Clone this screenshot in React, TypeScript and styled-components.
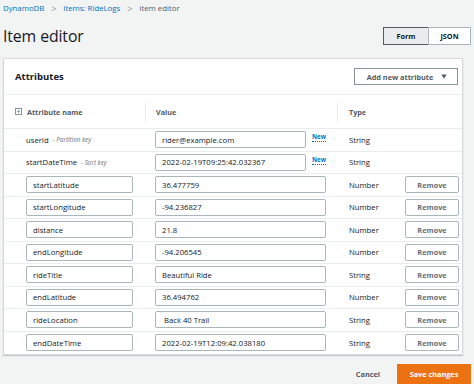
import React from "react";
import styled, { createGlobalStyle } from "styled-components";

const Global = createGlobalStyle`
  html, body { margin: 0; padding: 0; background: #f2f3f3; }
  body { font-family: "Open Sans", "Noto Sans", sans-serif; color: #16191f; }
  * { box-sizing: border-box; }
`;

const Page = styled.div`
  width: 474px;
  height: 384px;
  padding: 2px 3px 0 3px;
  display: flex;
  flex-direction: column;
  overflow: hidden;
`;

const Crumbs = styled.div`
  display: flex;
  align-items: center;
  height: 12px;
  font-size: 7.8px;
  color: #545b64;
`;

const CrumbLink = styled.span`
  color: #0073bb;
`;

const Sep = styled.span`
  color: #879596;
  width: 19px;
  text-align: center;
  font-size: 9px;
`;

const HeaderRow = styled.div`
  display: flex;
  justify-content: space-between;
  align-items: center;
  margin-top: 13px;
  height: 18px;
`;

const Title = styled.h1`
  margin: 0;
  font-size: 15.8px;
  font-weight: 400;
  letter-spacing: -0.1px;
  color: #16191f;
  line-height: 18px;
`;

const Toggle = styled.div`
  display: flex;
`;

const ToggleBtn = styled.button<{ $active?: boolean }>`
  height: 18px;
  width: ${(p) => (p.$active ? "46px" : "43px")};
  border: 1px solid ${(p) => (p.$active ? "#545b64" : "#aab7b8")};
  background: ${(p) => (p.$active ? "#eaeded" : "#ffffff")};
  color: #16191f;
  font-family: inherit;
  font-size: 7.3px;
  font-weight: 700;
  padding: 0;
  margin-left: ${(p) => (p.$active ? "0" : "-1px")};
`;

const Panel = styled.div`
  margin-top: 13px;
  width: 460px;
  background: #ffffff;
  border: 1px solid #d5dbdb;
  box-shadow: 0 1px 1px rgba(0, 28, 36, 0.2);
`;

const PanelHead = styled.div`
  height: 36px;
  display: flex;
  align-items: center;
  justify-content: space-between;
  padding: 0 4px 0 11px;
  border-bottom: 1px solid #eaeded;
`;

const PanelTitle = styled.h2`
  margin: 0;
  font-size: 9.5px;
  font-weight: 700;
  color: #16191f;
`;

const AddBtn = styled.button`
  height: 17px;
  width: 104px;
  border: 1px solid #879596;
  background: #fff;
  font-family: inherit;
  font-size: 7.3px;
  font-weight: 700;
  color: #545b64;
  display: flex;
  align-items: center;
  justify-content: center;
  gap: 8px;
  padding: 0 0 0 2px;
`;

const Row = styled.div<{ $head?: boolean }>`
  display: grid;
  grid-template-columns: 141px 192px 68px 1fr;
  align-items: center;
  height: ${(p) => (p.$head ? "34px" : "22.5px")};
  border-bottom: 1px solid #eaeded;
  font-size: 7.7px;
  &:last-child { border-bottom: none; }
`;

const HeadCell = styled.div<{ $divider?: boolean; $pl: number }>`
  display: flex;
  align-items: center;
  gap: 5px;
  height: 100%;
  padding-left: ${(p) => p.$pl}px;
  font-weight: 700;
  font-size: 7.2px;
  color: #545b64;
  position: relative;
  ${(p) =>
    p.$divider
      ? `&::before { content: ""; position: absolute; left: 0; top: 7px; bottom: 7px; width: 1px; background: #eaeded; }`
      : ""}
`;

const Cell = styled.div<{ $pl: number }>`
  display: flex;
  align-items: center;
  padding-left: ${(p) => p.$pl}px;
  color: #16191f;
  white-space: nowrap;
`;

const KeyName = styled.span`
  font-size: 7.7px;
  color: #16191f;
`;

const KeyHint = styled.span`
  font-size: 6.3px;
  font-style: italic;
  color: #687078;
  margin-left: 4px;
`;

const Input = styled.div<{ $w: number }>`
  width: ${(p) => p.$w}px;
  height: 17px;
  border: 1px solid #aab7b8;
  border-radius: 2px;
  padding-left: 6px;
  display: flex;
  align-items: center;
  font-size: 7.7px;
  color: #16191f;
`;

const NewLink = styled.span`
  margin-left: 6px;
  font-size: 6.2px;
  font-weight: 700;
  color: #0073bb;
  border-bottom: 1px dotted #0073bb;
  line-height: 8px;
  margin-top: -4px;
`;

const TypeText = styled.span`
  color: #16191f;
  font-size: 7.7px;
`;

const RemoveBtn = styled.button`
  width: 54px;
  height: 17px;
  border: 1px solid #aab7b8;
  border-radius: 2px;
  background: #fff;
  font-family: inherit;
  font-size: 7.3px;
  font-weight: 700;
  color: #687078;
  padding: 0;
`;

const Footer = styled.div`
  display: flex;
  justify-content: flex-end;
  align-items: center;
  margin-top: 9px;
  gap: 17px;
`;

const CancelBtn = styled.button`
  border: none;
  background: transparent;
  font-family: inherit;
  font-size: 7.3px;
  font-weight: 700;
  color: #545b64;
  padding: 0;
`;

const SaveBtn = styled.button`
  width: 74px;
  height: 20px;
  border: none;
  background: #ec7211;
  color: #fff;
  font-family: inherit;
  font-size: 7.3px;
  font-weight: 700;
  padding: 0;
`;

const PlusBox = () => (
  <svg width="7" height="7" viewBox="0 0 7 7">
    <rect x="0.5" y="0.5" width="6" height="6" fill="none" stroke="#879596" strokeWidth="1" />
    <path d="M3.5 2v3M2 3.5h3" stroke="#879596" strokeWidth="0.8" />
  </svg>
);

const Caret = () => (
  <svg width="6" height="5" viewBox="0 0 6 5">
    <path d="M0.3 0.5h5.4L3 4.8z" fill="#545b64" />
  </svg>
);

type Attr = { name: string; value: string; type: string };

const keys = [
  { name: "userId", hint: "Partition key", value: "rider@example.com" },
  { name: "startDateTime", hint: "Sort key", value: "2022-02-19T09:25:42.032367" },
];

const attrs: Attr[] = [
  { name: "startLatitude", value: "36.477759", type: "Number" },
  { name: "startLongitude", value: "-94.236827", type: "Number" },
  { name: "distance", value: "21.8", type: "Number" },
  { name: "endLongitude", value: "-94.206545", type: "Number" },
  { name: "rideTitle", value: "Beautiful Ride", type: "String" },
  { name: "endLatitude", value: "36.494762", type: "Number" },
  { name: "rideLocation", value: "\u00a0Back 40 Trail", type: "String" },
  { name: "endDateTime", value: "2022-02-19T12:09:42.038180", type: "String" },
];

export default function App() {
  return (
    <>
      <Global />
      <Page>
        <Crumbs>
          <CrumbLink>DynamoDB</CrumbLink>
          <Sep>&gt;</Sep>
          <CrumbLink>Items: RideLogs</CrumbLink>
          <Sep>&gt;</Sep>
          <span>Item editor</span>
        </Crumbs>
        <HeaderRow>
          <Title>Item editor</Title>
          <Toggle>
            <ToggleBtn $active>Form</ToggleBtn>
            <ToggleBtn>JSON</ToggleBtn>
          </Toggle>
        </HeaderRow>
        <Panel>
          <PanelHead>
            <PanelTitle>Attributes</PanelTitle>
            <AddBtn>
              Add new attribute <Caret />
            </AddBtn>
          </PanelHead>
          <Row $head>
            <HeadCell $pl={11}>
              <PlusBox />
              Attribute name
            </HeadCell>
            <HeadCell $pl={11} $divider>
              Value
            </HeadCell>
            <HeadCell $pl={12} $divider>
              Type
            </HeadCell>
            <HeadCell $pl={0} />
          </Row>
          {keys.map((k) => (
            <Row key={k.name}>
              <Cell $pl={22}>
                <KeyName>{k.name}</KeyName>
                <KeyHint>- {k.hint}</KeyHint>
              </Cell>
              <Cell $pl={10}>
                <Input $w={151}>{k.value}</Input>
                <NewLink>New</NewLink>
              </Cell>
              <Cell $pl={12}>
                <TypeText>String</TypeText>
              </Cell>
              <Cell $pl={0} />
            </Row>
          ))}
          {attrs.map((a) => (
            <Row key={a.name}>
              <Cell $pl={22}>
                <Input $w={107}>{a.name}</Input>
              </Cell>
              <Cell $pl={10}>
                <Input $w={171}>{a.value}</Input>
              </Cell>
              <Cell $pl={12}>
                <TypeText>{a.type}</TypeText>
              </Cell>
              <Cell $pl={0}>
                <RemoveBtn>Remove</RemoveBtn>
              </Cell>
            </Row>
          ))}
        </Panel>
        <Footer>
          <CancelBtn>Cancel</CancelBtn>
          <SaveBtn>Save changes</SaveBtn>
        </Footer>
      </Page>
    </>
  );
}
